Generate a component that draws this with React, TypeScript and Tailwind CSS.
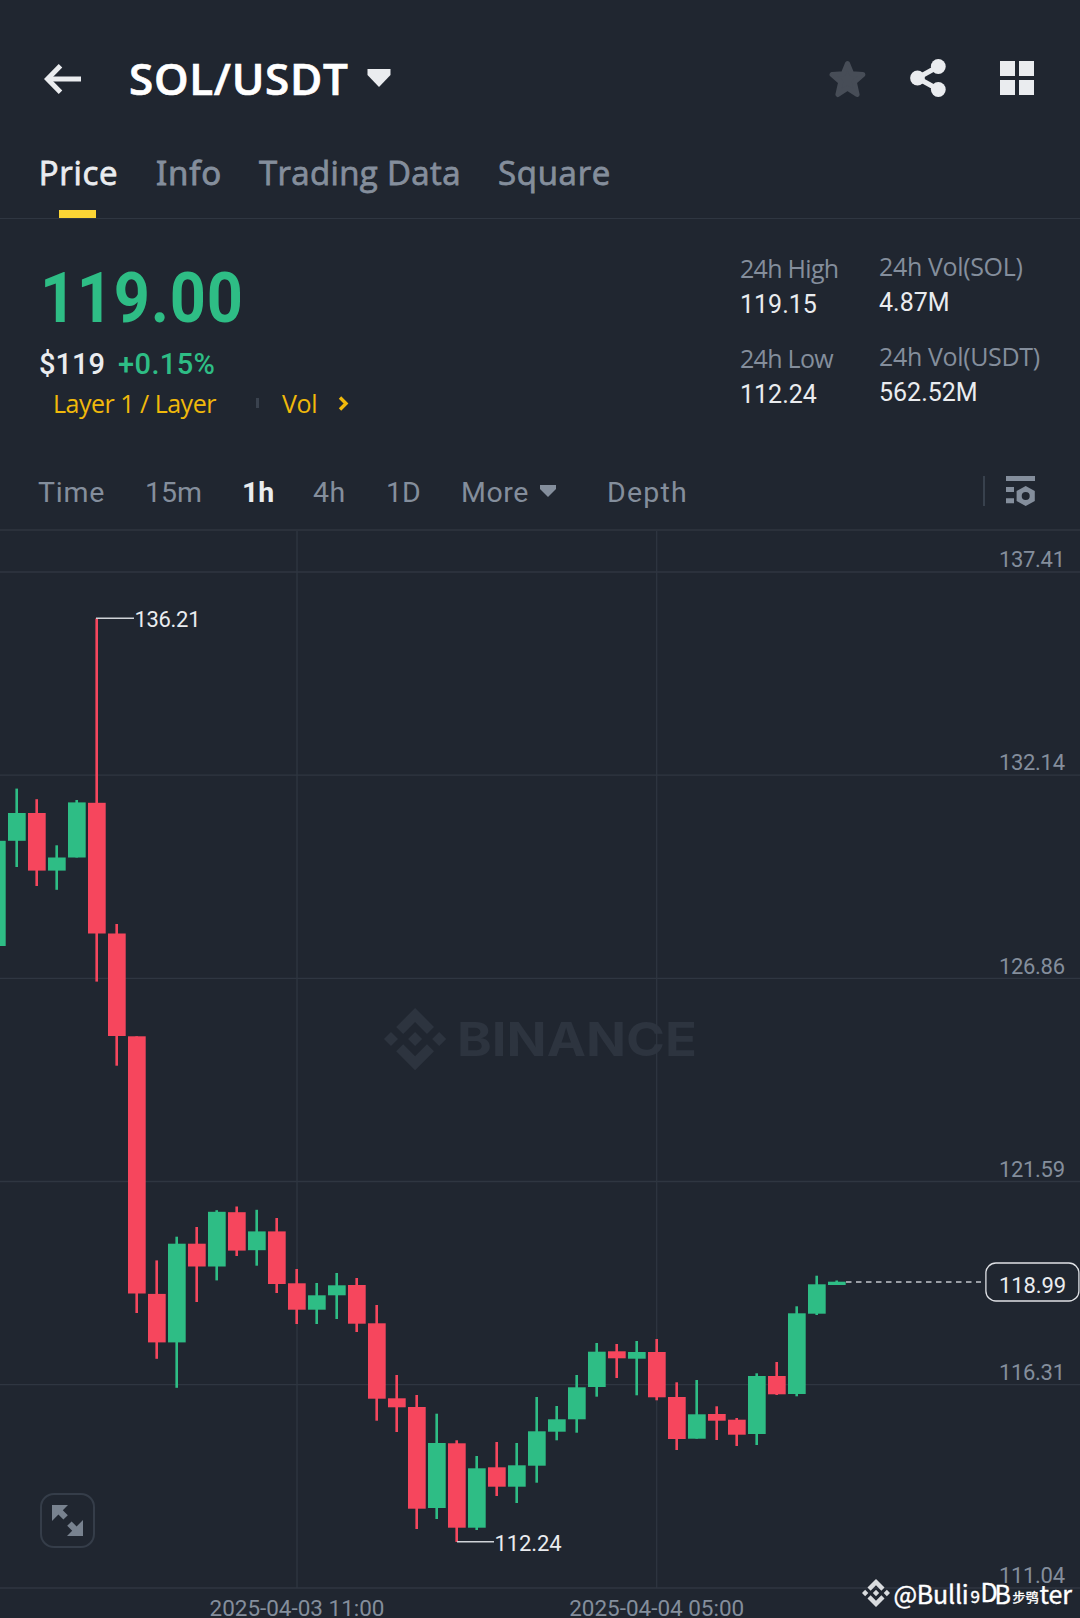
import type { ReactNode } from "react";

type Candle = {
  x: number;
  up: boolean;
  high: number;
  top: number;
  bottom: number;
  low: number;
};

const UP = "#2ebd85";
const DOWN = "#f6465d";

function c(x: number, side: "G" | "R", high: number, top: number, bottom: number, low: number): Candle {
  return { x, up: side === "G", high, top, bottom, low };
}

const CANDLES: Candle[] = [
  c(-12, "G", 840.8, 840.8, 946, 946),
  c(8, "G", 788.6, 813, 840.8, 867),
  c(28, "R", 799.2, 813, 870.6, 886),
  c(48, "G", 845.3, 857.5, 870.6, 889.8),
  c(68, "G", 800, 802.4, 857.5, 857.5),
  c(88, "R", 618.5, 802.8, 933.5, 981.6),
  c(108, "R", 924, 933.5, 1036, 1065.7),
  c(128, "R", 1036.3, 1036.3, 1293.5, 1313),
  c(148, "R", 1260.4, 1293.9, 1342.4, 1358.8),
  c(168, "G", 1236.7, 1243.7, 1342.4, 1387.8),
  c(188, "R", 1227, 1243.7, 1266.5, 1302),
  c(208, "G", 1210.2, 1211.8, 1266.5, 1280.4),
  c(228, "R", 1206.5, 1212.2, 1250.6, 1256),
  c(248, "G", 1209.8, 1231.4, 1250.2, 1265.7),
  c(268, "R", 1218, 1231.4, 1284, 1293),
  c(288, "R", 1269, 1283.3, 1309.7, 1324),
  c(308, "G", 1283, 1295.3, 1309.7, 1324),
  c(328, "G", 1273, 1285.3, 1295.3, 1319),
  c(348, "R", 1278, 1285, 1323.7, 1332),
  c(368, "R", 1305, 1323.3, 1398.7, 1420.7),
  c(388, "R", 1375, 1398.3, 1407.3, 1432),
  c(408, "R", 1395, 1407, 1508.7, 1529),
  c(428, "G", 1413.7, 1443, 1508, 1519),
  c(448, "R", 1440.3, 1443.3, 1527.7, 1542),
  c(468, "G", 1456, 1468.3, 1527.7, 1530),
  c(488, "R", 1442, 1467.3, 1486.7, 1496),
  c(508, "G", 1443, 1465.3, 1486.7, 1503),
  c(528, "G", 1397, 1431.3, 1465.7, 1482.7),
  c(548, "G", 1406, 1419.3, 1431.7, 1440.3),
  c(568, "G", 1375, 1387.3, 1419.3, 1432.7),
  c(588, "G", 1343, 1351.7, 1387, 1396.7),
  c(608, "R", 1344, 1351.3, 1358.3, 1378),
  c(628, "G", 1341, 1352, 1358.7, 1395.3),
  c(648, "R", 1339, 1352, 1397.3, 1400.3),
  c(668, "R", 1382.3, 1397, 1439, 1450),
  c(688, "G", 1380, 1414.3, 1438.7, 1438.7),
  c(708, "R", 1406.3, 1414, 1420.7, 1440),
  c(728, "R", 1418, 1419.7, 1434.7, 1446),
  c(748, "G", 1373.3, 1376, 1434, 1445),
  c(768, "R", 1362, 1376, 1394.3, 1395),
  c(788, "G", 1306.3, 1313.3, 1394, 1396.3),
  c(808, "G", 1275.7, 1284.3, 1313.7, 1315),
  c(828, "G", 1280.5, 1281.7, 1285, 1285),
];

const PRICE_LINES = [
  { y: 572, label: "137.41" },
  { y: 775.2, label: "132.14" },
  { y: 978.4, label: "126.86" },
  { y: 1181.5, label: "121.59" },
  { y: 1384.7, label: "116.31" },
  { y: 1588, label: "111.04" },
];

const TIME_LINES = [
  { x: 297, label: "2025-04-03 11:00" },
  { x: 656.7, label: "2025-04-04 05:00" },
];

const BNB_PATH =
  "M12 0 L19.3 7.3 L16.6 10 L12 5.4 L7.4 10 L4.7 7.3 Z M0 12 L2.7 9.3 L5.4 12 L2.7 14.7 Z M9.3 12 L12 9.3 L14.7 12 L12 14.7 Z M18.6 12 L21.3 9.3 L24 12 L21.3 14.7 Z M4.7 16.7 L7.4 14 L12 18.6 L16.6 14 L19.3 16.7 L12 24 Z";

export default function App() {
  return (
    <div className="relative flex h-[1618px] w-[1080px] flex-col overflow-hidden bg-[#202630] font-['Open_Sans',sans-serif] text-[#eaecef]">
      <Header />
      <Tabs />
      <Summary />
      <IntervalBar />
      <Chart />
      <Credit />
    </div>
  );
}

function Header() {
  return (
    <header className="mt-[46px] flex h-16 shrink-0 items-center pr-[46px] pl-11">
      <svg className="mt-px h-[30px] w-[38px]" viewBox="0 0 38 30" fill="none" stroke="#eaecef" strokeWidth="5">
        <path d="M37 15H4" />
        <path d="M16.5 1.8L3.5 15l13 13.2" />
      </svg>
      <h1 className="ml-[47px] w-[219px] text-[44px] leading-none font-semibold tracking-[0.7px] whitespace-nowrap text-white [-webkit-text-stroke:0.7px]">
        SOL/USDT
      </h1>
      <svg className="ml-[19px] h-[18px] w-6" viewBox="0 0 24 18" fill="#eaecef">
        <path d="M.5 0h23v6L12 18 .5 6z" />
      </svg>
      <div className="ml-auto flex items-center">
        <svg className="mt-0.5 h-[38px] w-[38px]" viewBox="0 0 38 38" fill="#474d57" stroke="#474d57" strokeWidth="5" strokeLinejoin="round">
          <path d="M18.500 3.500l4.200 10.200 11.200.9-8.600 7.400 2.800 12.500L18.500 28.200 8.900 34.500l2.800-12.500-8.600-7.400 11.200-.9z" />
        </svg>
        <svg className="ml-[43px] h-[38px] w-9" viewBox="0 0 36 38" fill="#eaecef">
          <path d="M28.3 7.5L7.5 19l20.8 11.5" fill="none" stroke="#eaecef" strokeWidth="5" />
          <circle cx="28.3" cy="7.5" r="7.4" />
          <circle cx="7.5" cy="19" r="7.4" />
          <circle cx="28.3" cy="30.5" r="7.4" />
        </svg>
        <div className="ml-[54px] grid grid-cols-2 gap-1">
          <i className="size-[15px] bg-[#eaecef]" />
          <i className="size-[15px] bg-[#eaecef]" />
          <i className="size-[15px] bg-[#eaecef]" />
          <i className="size-[15px] bg-[#eaecef]" />
        </div>
      </div>
    </header>
  );
}

function Tabs() {
  return (
    <nav className="flex h-[109px] shrink-0 border-b border-[#2f3641] pt-[39px] pl-10 text-[33px] leading-[48px] tracking-[0.35px] whitespace-nowrap text-[#848e9c] [-webkit-text-stroke:0.8px]">
      <div className="flex w-[77px] flex-col items-center text-[#eaecef]">
        <span className="tracking-[0.7px]">Price</span>
        <span className="mt-[13px] mr-0.5 h-2 w-[37px] bg-[#fcd535]" />
      </div>
      <span className="ml-[39px] w-[103px] font-['Noto_Sans',sans-serif] tracking-[0.8px]">Info</span>
      <span className="w-[239px]">Trading Data</span>
      <span className="tracking-[0.7px]">Square</span>
    </nav>
  );
}

function Summary() {
  return (
    <section className="flex h-[237px] shrink-0 pl-[39px]">
      <div className="w-[701px] pt-[49px] whitespace-nowrap">
        <p className="origin-left scale-x-90 pl-px font-[Roboto,sans-serif] text-[70px] leading-[60px] font-bold tracking-[0.9px] text-[#2ebd85]">
          119.00
        </p>
        <p className="mt-[18px] flex font-[Roboto,sans-serif] text-[29px] leading-9 font-medium">
          <span className="w-[79px]">$119</span>
          <span className="tracking-[0.4px] text-[#2ebd85]">+0.15%</span>
        </p>
        <p className="mt-1.5 flex items-center pl-[14px] text-[25px] leading-[30px] text-[#f0b90b]">
          <span className="w-[203px] tracking-[-0.5px]">Layer 1 / Layer</span>
          <span className="h-[10px] w-[3px] bg-[#3a424e]" />
          <span className="ml-[23px] w-14 tracking-[-0.3px]">Vol</span>
          <svg className="h-[15px] w-[11px]" viewBox="0 0 11 15" fill="none" stroke="#f0b90b" strokeWidth="3.4">
            <path d="M2 1.5l6 6-6 6" />
          </svg>
        </p>
      </div>
      <div className="flex w-[139px] flex-col gap-[21px] pt-8 tracking-[-0.7px]">
        <Stat label="24h High" value="119.15" />
        <Stat label="24h Low" value="112.24" />
      </div>
      <div className="flex flex-col gap-[21px] pt-[30px] tracking-[-0.35px]">
        <Stat label="24h Vol(SOL)" value="4.87M" />
        <Stat label="24h Vol(USDT)" value="562.52M" />
      </div>
    </section>
  );
}

function Stat({ label, value }: { label: string; value: string }) {
  return (
    <div className="text-[25px] leading-[34px] whitespace-nowrap">
      <p className="text-[#848e9c]">{label}</p>
      <p className="mt-[3px] -mb-0.5 font-[Roboto,sans-serif] tracking-normal">{value}</p>
    </div>
  );
}

function IntervalBar() {
  return (
    <div className="flex h-[75px] shrink-0 items-center border-b-2 border-[#2b313b] pl-[38px] font-[Roboto,sans-serif] text-[28.5px] whitespace-nowrap text-[#848e9c]">
      <Interval className="w-[107px] tracking-[0.8px]">Time</Interval>
      <Interval className="w-[97px]">15m</Interval>
      <Interval className="w-[71px] font-bold text-[#eaecef]">1h</Interval>
      <Interval className="w-[73px] tracking-[0.6px]">4h</Interval>
      <Interval className="w-[75px]">1D</Interval>
      <Interval className="w-[79px] tracking-[0.6px]">More</Interval>
      <svg className="-mt-1 mr-[51px] h-3 w-4" viewBox="0 0 16 12" fill="#848e9c">
        <path d="M0 0h16v4L8 12 0 4z" />
      </svg>
      <Interval className="tracking-[1.2px]">Depth</Interval>
      <span className="mr-[21px] ml-auto h-[30px] w-[2px] -translate-y-0.5 bg-[#38414d]" />
      <svg className="mr-[45px] h-[30px] w-[29px] -translate-y-0.5" viewBox="0 0 29 30" fill="#848e9c">
        <path d="M0 0h29v5H0zM0 11h8v5H0zM0 22.2h8v5H0z" />
        <path fillRule="evenodd" d="M19.7 10l9.1 5v10l-9.1 5-9.1-5V15zM19.7 16a4 4 0 1 0 0 8 4 4 0 0 0 0-8z" />
      </svg>
    </div>
  );
}

function Interval({ className = "", children }: { className?: string; children: ReactNode }) {
  return <span className={`pt-[2px] ${className}`}>{children}</span>;
}

function Chart() {
  return (
    <svg className="h-[1087px] w-[1080px] shrink-0 font-[Roboto,sans-serif]" viewBox="0 531 1080 1087" fontSize="22">
      {/* watermark */}
      <g fill="#2d343f">
        <path transform="translate(384 1008) scale(2.59)" d={BNB_PATH} />
        <text
          x="457"
          y="1056"
          textLength="240"
          lengthAdjust="spacingAndGlyphs"
          className="font-[Inter,sans-serif] font-bold"
          fontSize="47"
        >
          BINANCE
        </text>
      </g>

      {/* grid */}
      <g stroke="#2f3641" strokeWidth="1.3">
        {PRICE_LINES.map((line) => (
          <line key={line.label} x1="0" x2="1080" y1={line.y} y2={line.y} />
        ))}
        {TIME_LINES.map((line) => (
          <line key={line.label} x1={line.x} x2={line.x} y1="531" y2="1588" />
        ))}
      </g>

      {CANDLES.map((k) => (
        <g key={k.x} fill={k.up ? UP : DOWN}>
          <rect x={k.x + 7.4} y={k.high} width="2.6" height={k.low - k.high} />
          <rect x={k.x} y={k.top} width="17.7" height={k.bottom - k.top} />
        </g>
      ))}

      {/* high and low of the visible range */}
      <g stroke="#d0d3d8" strokeWidth="1.4">
        <line x1="96" x2="134" y1="618.3" y2="618.3" />
        <line x1="457" x2="494" y1="1541.7" y2="1541.7" />
      </g>
      <g fill="#eaecef">
        <text x="134.5" y="627.3" textLength="66" lengthAdjust="spacing">136.21</text>
        <text x="494.5" y="1551" textLength="67" lengthAdjust="spacing">112.24</text>
      </g>

      <g fill="#848e9c">
        {PRICE_LINES.map((line) => (
          <text key={line.label} x="999" y={line.y - 4.8} textLength="66" lengthAdjust="spacing">
            {line.label}
          </text>
        ))}
        {TIME_LINES.map((line) => (
          <text
            key={line.label}
            x={line.x}
            y="1615.5"
            textAnchor="middle"
            textLength="175"
            lengthAdjust="spacingAndGlyphs"
          >
            {line.label}
          </text>
        ))}
      </g>

      {/* last price */}
      <line x1="846" x2="981" y1="1282" y2="1282" stroke="#c3c7cd" strokeWidth="1.5" strokeDasharray="5.5 4.5" />
      <rect x="985.9" y="1263" width="93" height="38" rx="10" fill="#202630" stroke="#dfe1e5" strokeWidth="1.3" />
      <text x="999" y="1293" fill="#eaecef" textLength="67" lengthAdjust="spacing">118.99</text>

      {/* fullscreen */}
      <rect x="41" y="1494" width="53" height="53" rx="13" fill="none" stroke="#353d49" strokeWidth="2" />
      <g fill="#78828f">
        <path d="M52 1505h16l-5.2 5.2 5 5-4.4 4.4-5-5L52 1521z" />
        <path d="M83 1536H67l5.2-5.2-5-5 4.4-4.4 5 5L83 1520z" />
      </g>
    </svg>
  );
}

function Credit() {
  return (
    <div className="absolute right-2 bottom-[5px] flex h-10 items-center font-['Noto_Sans_CJK_SC',sans-serif] text-[25px] leading-none whitespace-nowrap text-white [-webkit-text-stroke:0.4px]">
      <svg className="mr-[3px] size-7" viewBox="0 0 24 24" fill="#d9dbde">
        <path d={BNB_PATH} />
      </svg>
      <span className="w-[77px] tracking-[-0.2px]">@Bulli</span>
      <span className="mt-1 w-[10px] text-[17px]">9</span>
      <span className="-mt-1 w-[14px]">D</span>
      <span className="w-[18px]">B</span>
      <span className="mt-1.5 w-[13px] text-[13px]">步</span>
      <span className="mt-1.5 w-[14px] text-[13px]">鸮</span>
      <span>ter</span>
    </div>
  );
}
